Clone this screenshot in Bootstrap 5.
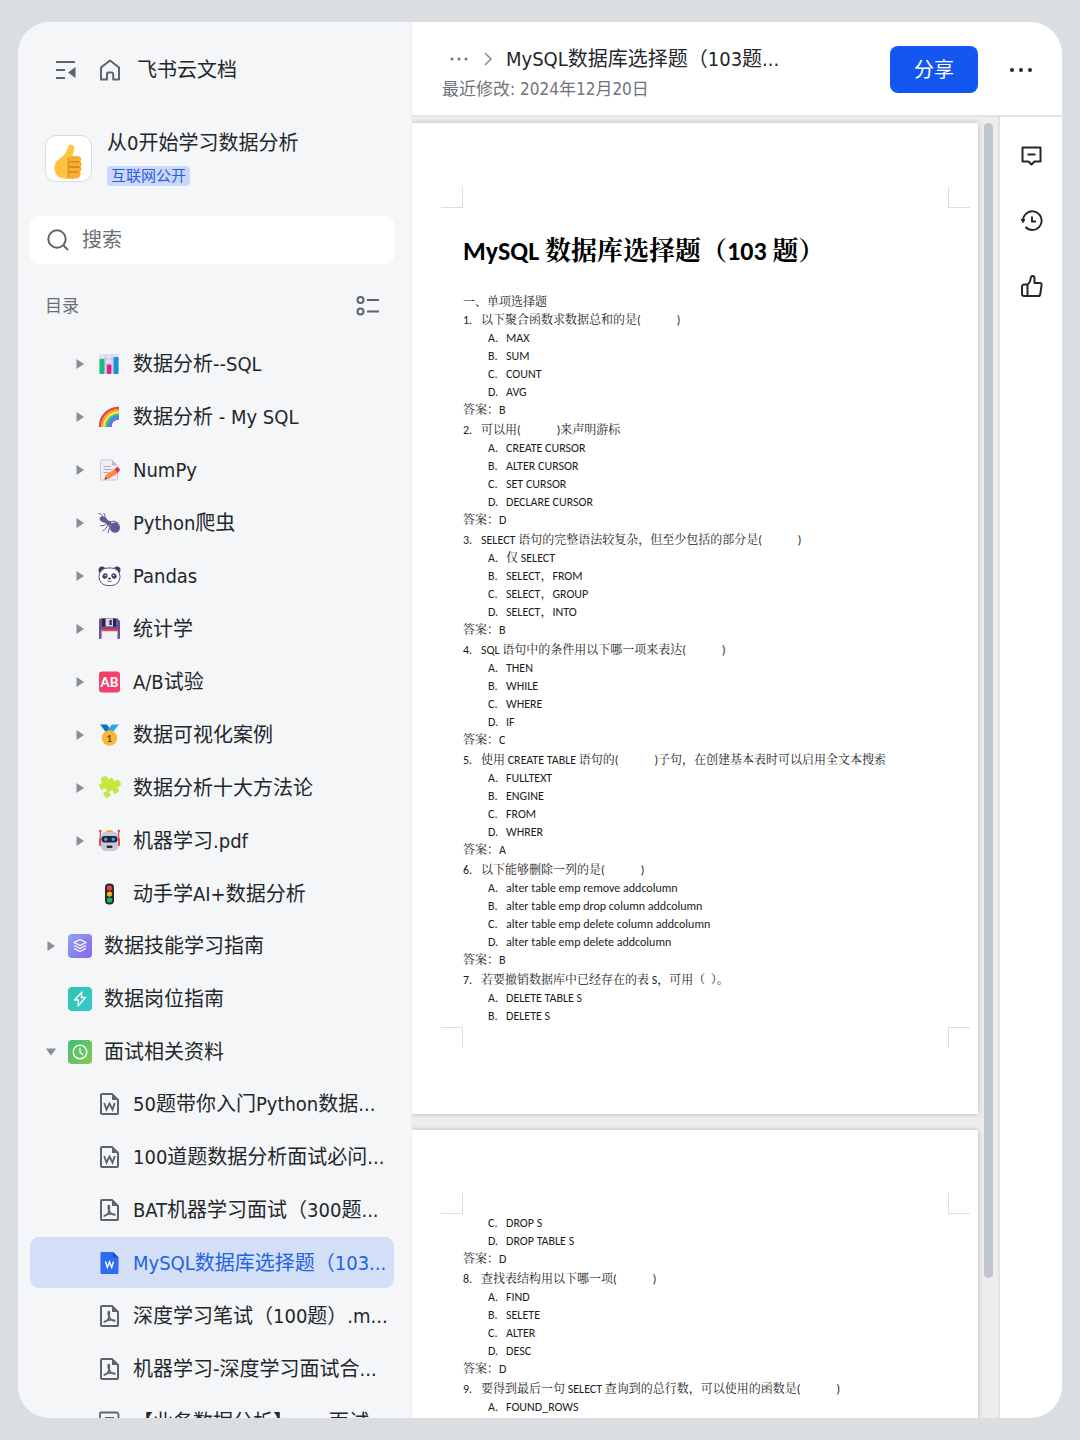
<!DOCTYPE html>
<html lang="zh-CN">
<head>
<meta charset="utf-8">
<meta name="viewport" content="width=device-width, initial-scale=1">
<title>MySQL数据库选择题 - 飞书云文档</title>
<link href="https://cdn.jsdelivr.net/npm/bootstrap@5.3.0/dist/css/bootstrap.min.css" rel="stylesheet">
<style>
  body { background: #dadee2; color: #23272b; font-family: "DejaVu Sans Condensed", "Noto Sans", "Noto Sans CJK SC", sans-serif; font-size: 20px; line-height: 26px; }
  svg { display: block; flex: none; }
  .shell { height: 100vh; padding: 22px 18px; }
  .frame { border-radius: 32px; background: #fff; }
  a { color: inherit; text-decoration: none; }

  .side { flex: 0 0 394px; background: #f4f6f8; padding: 0 17px 0 12px; border-right: 1px solid #eceef0; }
  .side-top { height: 96px; padding-left: 24px; gap: 21px; color: #5f646b; }
  .side-top a { gap: 16px; }
  .side-name { color: #23272b; }
  .site { padding: 12px 0 0 15px; gap: 15px; }
  .thumb { width: 47px; height: 47px; border: 1px solid #d9dbde; border-radius: 11px; background: #fff; padding: 8px 0 0 8px; flex: none; }
  .tag { background: #ccd8fa; color: #2a5fdc; font-size: 15px; line-height: 20px; border-radius: 4px; padding: 0 4px; margin-top: 10px; }
  .finder { margin-top: 30px; height: 48px; background: #fff; border-radius: 9px; padding-left: 17px; gap: 12px; color: #5f646b; }
  .finder input { font-size: 20px; color: #23272b; outline: 0; }
  .finder input::placeholder { color: #6b7077; opacity: 1; }
  .dir { margin: 28px 14px 18px 15px; height: 28px; font-size: 17px; color: #6b7077; }
  .tree { gap: 2px; }
  .tree + .tree { margin-top: 1px; }
  .node { height: 51px; padding-left: 15px; border-radius: 9px; white-space: nowrap; }
  .node .caret { width: 12px; height: 12px; margin-right: 11px; flex: none; }
  .node .caret svg { fill: #8a8f96; }
  .node .pic { margin-right: 12px; color: #5f646b; }
  .deep .node { padding-left: 44px; }
  .node.here { background: #d2dff7; color: #2563e0; }

  .head { height: 95px; border-bottom: 2px solid #e2e4e6; padding: 2px 28px 0 30px; }
  .crumb { gap: 12px; padding-left: 6px; line-height: 30px; }
  .edited { font-size: 17px; line-height: 30px; color: #6f747a; }
  .share { background: #1456f0; color: #fff; border: 0; border-radius: 8px; width: 88px; height: 47px; font-size: 20px; margin-right: 30px; }
  .share:hover { background: #0f49d0; color: #fff; }
  .bare { background: none; border: 0; padding: 0; color: inherit; }

  .reader { background: #ededee; border-right: 2px solid #e0e2e4; padding-top: 6px; }
  .sheets { gap: 16px; }
  .sheet { background: #fff; padding: 64px 8px 66px 29px; box-shadow: 0 0 5px rgba(0,0,0,.22); color: #1c1c1c; font-family: Carlito, Lato, "Noto Serif CJK SC", "Noto Sans CJK SC", sans-serif; font-size: 12px; line-height: 18px; }
  .sheet + .sheet { padding-top: 63px; }
  .marks i { width: 22px; height: 21px; border: 0 solid #dcdcdc; }
  .marks .tl { border-width: 0 1px 1px 0; }
  .marks .tr { border-width: 0 0 1px 1px; }
  .marks .bl { border-width: 1px 1px 0 0; }
  .marks .br { border-width: 1px 0 0 1px; }
  .copy { padding-left: 22px; margin-bottom: 2px; white-space: nowrap; }
  .copy h1 { font-size: 26px; line-height: 36px; font-weight: 700; margin: 25px 0 24px; color: #000; }
  .copy p { margin: 0; }
  .quiz { margin-bottom: 2px; }
  .quiz p, .quiz li { display: flex; }
  .quiz b { font-weight: 400; width: 18px; flex: none; }
  .quiz ul { list-style: none; margin: 0; padding-left: 25px; }

  .rail { width: 20px; flex: none; padding: 0 6px; }
  .rail i { width: 9px; height: 1155px; max-height: 90%; border-radius: 5px; background: #c0c4cb; }
  .tools { width: 62px; flex: none; padding-top: 27px; gap: 41px; color: #23272b; }
</style>
</head>
<body>
<svg width="0" height="0" class="position-absolute" aria-hidden="true">
  <symbol id="right" viewBox="0 0 12 12"><path d="M2.500 1v10L10 6z"/></symbol>
  <symbol id="down" viewBox="0 0 12 12"><path d="M.8 2.500h10.400L6 9.500z"/></symbol>
  <symbol id="word" viewBox="0 0 24 24"><path d="M5 2h10l6 6v13a1 1 0 0 1-1 1H5a1 1 0 0 1-1-1V3a1 1 0 0 1 1-1z" fill="none" stroke="currentColor" stroke-width="2"/><path d="M15 2v6h6z" fill="currentColor"/><path d="M7.200 11l2.300 6.500 3-6 3 6 2.300-6.500" fill="none" stroke="currentColor" stroke-width="1.900"/></symbol>
  <symbol id="pdf" viewBox="0 0 24 24"><path d="M5 2h10l6 6v13a1 1 0 0 1-1 1H5a1 1 0 0 1-1-1V3a1 1 0 0 1 1-1z" fill="none" stroke="currentColor" stroke-width="2"/><path d="M15 2v6h6z" fill="currentColor"/><path d="M12 7.500v4.500c0 2.500-2 5-4.800 6M12 12c.5 2.500 2.500 4.500 5.800 5M8 17.300c2.500-1.300 6.500-1.800 9.500-1" fill="none" stroke="currentColor" stroke-width="1.700" stroke-linecap="round"/><path d="M11.800 8v2.500" stroke="currentColor" stroke-width="2.600" stroke-linecap="round"/></symbol>
</svg>

<div class="shell">
<div class="frame d-flex h-100 overflow-hidden">

  <nav class="side d-flex flex-column overflow-hidden" aria-label="知识库">
    <div class="side-top d-flex align-items-center flex-shrink-0">
      <button class="bare" type="button" aria-label="收起侧栏"><svg width="24" height="24" viewBox="0 0 24 24"><path d="M2 4h19M2 12h9M2 20h9" stroke="currentColor" stroke-width="2"/><path d="M21.500 9v11L14 14.500z" fill="currentColor"/></svg></button>
      <a href="#" class="d-flex align-items-center"><svg width="22" height="24" viewBox="0 0 22 24" fill="none" stroke="currentColor" stroke-width="2" stroke-linejoin="round"><path d="M2 9.500L11 2.500l9 7V21.500h-5.800v-5.500a1.500 1.500 0 0 0-1.500-1.500H9.500A1.500 1.500 0 0 0 8 16v5.500H2z"/></svg><span class="side-name">飞书云文档</span></a>
    </div>

    <div class="site d-flex align-items-center flex-shrink-0">
      <div class="thumb"><svg width="29" height="36" viewBox="0 0 29 36"><path d="M15 1c2-1.500 5.500 0 5.200 3.500-.3 3-1.700 5.500-1.500 7.500l6 .5c3 .4 2.800 4 1.300 5 1.900 1 1.900 4 .3 5 1.600 1.200 1.400 4-.4 5 1.200 1.500.6 5.500-2.400 6.500-4 1-10 1-14 .5C3 34 0 29 .5 22.500 1 17 5 15 8.500 12.500 12 9.500 13 6 15 1z" fill="#fec440"/><path d="M14 13c3-1 8-.9 11-.4 2.800.8 2.300 4 1 4.900 1.900 1 1.900 4 .3 5 1.600 1.200 1.400 4-.4 5 1.200 1.500.6 5.500-2.400 6.500-3 .7-6.500.8-9.500.6z" fill="#f9ae2e"/><path d="M15.500 17.800h9M15.500 23h9.500M15.500 28.200h8.500" stroke="#cf7f22" stroke-width="1.300" stroke-linecap="round"/><path d="M14.300 13.500v20.500" stroke="#dd9226" stroke-width="1.300"/></svg></div>
      <div class="d-flex flex-column align-items-start"><span>从0开始学习数据分析</span><span class="tag">互联网公开</span></div>
    </div>

    <label class="finder d-flex align-items-center flex-shrink-0">
      <svg width="23" height="23" viewBox="0 0 23 23" fill="none" stroke="currentColor" stroke-width="2"><circle cx="10" cy="10" r="8.700"/><path d="M16.500 16.500l4.500 4.500"/></svg>
      <input type="search" class="border-0 bg-transparent p-0 flex-fill" placeholder="搜索" aria-label="搜索">
    </label>

    <div class="dir d-flex align-items-center justify-content-between flex-shrink-0">
      <span>目录</span>
      <button class="bare" type="button" aria-label="目录选项"><svg width="24" height="22" viewBox="0 0 24 22" fill="none" stroke="#5f646b" stroke-width="2"><circle cx="4.500" cy="5" r="3"/><circle cx="4.500" cy="16.500" r="3"/><path d="M11 5h12M11 16.500h12"/></svg></button>
    </div>

    <ul class="tree deep list-unstyled d-flex flex-column mb-0 flex-shrink-0">
      <li><a href="#" class="node d-flex align-items-center"><span class="caret"><svg width="12" height="12"><use href="#right"/></svg></span><svg class="pic" width="24" height="24" viewBox="0 0 24 24"><rect x="2" y="2" width="20" height="20" rx="2" fill="#e3def0"/><path d="M2 7h20M2 12h20M2 17h20M8.500 2v20M15 2v20" stroke="#c5bdd9" stroke-width=".7"/><rect x="2.500" y="7" width="5" height="15" rx="1" fill="#17c07a"/><rect x="9.800" y="12.500" width="4.600" height="9.500" rx="1" fill="#e0208c"/><rect x="16.500" y="5" width="5" height="17" rx="1" fill="#1592d8"/></svg><span>数据分析--SQL</span></a></li>
      <li><a href="#" class="node d-flex align-items-center"><span class="caret"><svg width="12" height="12"><use href="#right"/></svg></span><svg class="pic" width="24" height="24" viewBox="0 0 24 24" fill="none" stroke-width="2.400"><path d="M3 22C3 11 11 3 22 3" stroke="#e04a3c"/><path d="M5.200 22C5.200 12.500 12.500 5.200 22 5.200" stroke="#fb9a2d"/><path d="M7.400 22C7.400 13.500 13.500 7.400 22 7.400" stroke="#fde047"/><path d="M9.600 22C9.600 15 15 9.600 22 9.600" stroke="#3fc26c"/><path d="M11.800 22C11.800 16 16 11.800 22 11.800" stroke="#2a93e8"/><path d="M13.800 22C13.800 17 17 13.800 22 13.800" stroke="#8a5bd6" stroke-width="2"/></svg><span>数据分析 - My SQL</span></a></li>
      <li><a href="#" class="node d-flex align-items-center"><span class="caret"><svg width="12" height="12"><use href="#right"/></svg></span><svg class="pic" width="24" height="24" viewBox="0 0 24 24"><path d="M4.500 2H15l5.500 5.500V21a1 1 0 0 1-1 1h-15a1 1 0 0 1-1-1V3a1 1 0 0 1 1-1z" fill="#f1eef6" stroke="#cdc6d8"/><path d="M15 2v5.500h5.500z" fill="#c3bad0"/><path d="M6.500 8.500h7M6.500 11.500h9M6.500 14.500h6" stroke="#b1a8bf" stroke-width="1.100"/><path d="M7.500 21.500l1.300-4.500L18 11l3 4-9.500 6z" fill="#fb8a3c"/><path d="M17.500 11.300l2-1.800c1.600-1.200 4.400 2 3 3.600l-2 2z" fill="#e0325f"/><path d="M7.500 21.500l.8-2.600 1.800 2z" fill="#5b3a3a"/></svg><span>NumPy</span></a></li>
      <li><a href="#" class="node d-flex align-items-center"><span class="caret"><svg width="12" height="12"><use href="#right"/></svg></span><svg class="pic" width="24" height="24" viewBox="0 0 24 24" fill="#635994"><ellipse cx="6.500" cy="8.500" rx="4" ry="2.800" transform="rotate(25 6.500 8.500)"/><ellipse cx="11.500" cy="12" rx="3.300" ry="2.300" transform="rotate(30 11.500 12)"/><ellipse cx="18" cy="16.500" rx="5" ry="5.300"/><path d="M6 6.500C5.500 4 4 2.500 1.500 2.500M8 6.500C8.500 4.500 7.500 3 6.500 2M9 13c-2 2-4 2-6 1.500M11 14c-1.500 3-3 4.500-5.500 6M12.500 14c0 3-.5 5-1.500 8M13 11l4-1 4 2" fill="none" stroke="#635994" stroke-width="1"/></svg><span>Python爬虫</span></a></li>
      <li><a href="#" class="node d-flex align-items-center"><span class="caret"><svg width="12" height="12"><use href="#right"/></svg></span><svg class="pic" width="24" height="24" viewBox="0 0 24 24"><circle cx="5" cy="6" r="3.500" fill="#433b6b"/><circle cx="20" cy="6" r="3.500" fill="#433b6b"/><rect x="2" y="4" width="21" height="17.500" rx="8.500" fill="#fff" stroke="#57506f" stroke-width="1"/><ellipse cx="8" cy="12" rx="2.500" ry="2.800" fill="#433b6b" transform="rotate(25 8 12)"/><ellipse cx="17" cy="12" rx="2.500" ry="2.800" fill="#433b6b" transform="rotate(-25 17 12)"/><circle cx="8.500" cy="11.500" r=".8" fill="#fff"/><circle cx="16.500" cy="11.500" r=".8" fill="#fff"/><ellipse cx="12.500" cy="14.500" rx="1.300" ry=".9" fill="#222"/><path d="M10.500 17c.8.900 1.600.7 2-.2.400.9 1.200 1.100 2 .2" fill="none" stroke="#222" stroke-width=".9"/></svg><span>Pandas</span></a></li>
      <li><a href="#" class="node d-flex align-items-center"><span class="caret"><svg width="12" height="12"><use href="#right"/></svg></span><svg class="pic" width="24" height="24" viewBox="0 0 24 24"><path d="M3 1.500h17.500L23 4v17a1 1 0 0 1-1 1H3a1 1 0 0 1-1-1V2.500a1 1 0 0 1 1-1z" fill="#6a539c"/><rect x="5" y="1.500" width="14" height="8" fill="#2d2146"/><rect x="8.500" y="1.500" width="7.500" height="8" fill="#d8d2e6"/><rect x="12.500" y="3" width="2.200" height="5" fill="#2d2146"/><rect x="4.500" y="12.500" width="16" height="9.500" fill="#f3f0f7"/><rect x="4.500" y="12" width="16" height="2.200" fill="#f03e4e"/></svg><span>统计学</span></a></li>
      <li><a href="#" class="node d-flex align-items-center"><span class="caret"><svg width="12" height="12"><use href="#right"/></svg></span><svg class="pic" width="24" height="24" viewBox="0 0 24 24"><rect x="2" y="1.500" width="21" height="21" rx="3" fill="#f43f6b"/><text x="12.500" y="17" text-anchor="middle" font-family="Lato, sans-serif" font-weight="900" font-size="13" fill="#fff">AB</text></svg><span>A/B试验</span></a></li>
      <li><a href="#" class="node d-flex align-items-center"><span class="caret"><svg width="12" height="12"><use href="#right"/></svg></span><svg class="pic" width="24" height="24" viewBox="0 0 24 24"><path d="M3 1.500h7l3.500 5-4 3.500z" fill="#0f74bd"/><path d="M22 1.500h-7L10.500 7l4.500 3z" fill="#28a5e6"/><circle cx="12.500" cy="15" r="7.700" fill="#fbb53c"/><text x="12.500" y="19" text-anchor="middle" font-family="Lato, sans-serif" font-weight="700" font-size="10" fill="#7a4a12">1</text></svg><span>数据可视化案例</span></a></li>
      <li><a href="#" class="node d-flex align-items-center"><span class="caret"><svg width="12" height="12"><use href="#right"/></svg></span><svg class="pic" width="24" height="24" viewBox="0 0 24 24"><path transform="rotate(-28 12 12)" d="M5 5h4.500c.8-.6-.4-1.300-.4-2.600C9.100.900 10.400 0 12 0s2.900.900 2.900 2.400c0 1.300-1.200 2-.4 2.600H19v4.500c.6.800 1.300-.4 2.600-.4 1.500 0 2.400 1.300 2.400 2.900s-.9 2.900-2.400 2.900c-1.300 0-2-1.200-2.600-.4V19h-4.500c-.8-.6.400-1.300.4-2.300 0-1.300-1.300-2.200-2.900-2.200s-2.900.900-2.900 2.200c0 1 1.200 1.700.4 2.300H5v-4.500c.6-.8 1.300.4 2.300.4 1.300 0 2.200-1.300 2.200-2.900s-.9-2.900-2.200-2.900c-1 0-1.700 1.200-2.300.4z" fill="#c4e83e" stroke="#c4e83e" stroke-width="1.500" stroke-linejoin="round"/></svg><span>数据分析十大方法论</span></a></li>
      <li><a href="#" class="node d-flex align-items-center"><span class="caret"><svg width="12" height="12"><use href="#right"/></svg></span><svg class="pic" width="24" height="24" viewBox="0 0 24 24"><path d="M3.300 1v9M21.700 1v9" stroke="#c9505c" stroke-width="1.200"/><circle cx="3.300" cy="2" r="1.300" fill="#f0454f"/><circle cx="21.700" cy="2" r="1.300" fill="#f0454f"/><rect x="2" y="9" width="3" height="8" rx="1" fill="#f0454f"/><rect x="20" y="9" width="3" height="8" rx="1" fill="#f0454f"/><path d="M8.500 4c0-4 8-4 8 0z" fill="#fb9f3c"/><path d="M4 7c0-2.500 2-4 4.500-4h8C19 3 21 4.500 21 7v10c0 2.800-1.800 5-4.500 5h-8C5.800 22 4 19.800 4 17z" fill="#cbc7d6"/><rect x="4.500" y="7" width="16" height="6.500" rx="3.200" fill="#23263b"/><circle cx="8.700" cy="10.200" r="1.700" fill="#22b1ee"/><circle cx="16.300" cy="10.200" r="1.700" fill="#22b1ee"/><rect x="9.500" y="16.500" width="6" height="2.400" rx="1.200" fill="#2b2a35"/></svg><span>机器学习.pdf</span></a></li>
      <li><a href="#" class="node d-flex align-items-center"><span class="caret"></span><svg class="pic" width="24" height="24" viewBox="0 0 24 24"><rect x="8" y="1.500" width="9" height="21" rx="4" fill="#2c2b33"/><circle cx="12.500" cy="6" r="2.600" fill="#ee3f43"/><circle cx="12.500" cy="12" r="2.600" fill="#fbb02d"/><circle cx="12.500" cy="18" r="2.600" fill="#17b866"/></svg><span>动手学AI+数据分析</span></a></li>
    </ul>
    <ul class="tree list-unstyled d-flex flex-column mb-0 flex-shrink-0">
      <li><a href="#" class="node d-flex align-items-center"><span class="caret"><svg width="12" height="12"><use href="#right"/></svg></span><svg class="pic" width="24" height="24" viewBox="0 0 24 24"><defs><linearGradient id="g1" x2="1" y2="1"><stop stop-color="#8fa0f8"/><stop offset="1" stop-color="#8468e6"/></linearGradient></defs><rect width="24" height="24" rx="4" fill="url(#g1)"/><g fill="none" stroke="#fff" stroke-width="1.300" stroke-linejoin="round"><path d="M12 5.500l6 3-6 3-6-3z"/><path d="M6 11.500l6 3 6-3M6 14.500l6 3 6-3"/></g></svg><span>数据技能学习指南</span></a></li>
      <li><a href="#" class="node d-flex align-items-center"><span class="caret"></span><svg class="pic" width="24" height="24" viewBox="0 0 24 24"><defs><linearGradient id="g2" x2="1" y2="1"><stop stop-color="#2cc7a6"/><stop offset="1" stop-color="#3ac6d4"/></linearGradient></defs><rect width="24" height="24" rx="4" fill="url(#g2)"/><path d="M14 5l-7.500 8h4L10 19l7.500-8.500h-4.300z" fill="none" stroke="#fff" stroke-width="1.300" stroke-linejoin="round"/></svg><span>数据岗位指南</span></a></li>
      <li><a href="#" class="node d-flex align-items-center"><span class="caret"><svg width="12" height="12"><use href="#down"/></svg></span><svg class="pic" width="24" height="24" viewBox="0 0 24 24"><defs><linearGradient id="g3" x2="1" y2="1"><stop stop-color="#41bf7d"/><stop offset="1" stop-color="#8ac653"/></linearGradient></defs><rect width="24" height="24" rx="4" fill="url(#g3)"/><g fill="none" stroke="#fff" stroke-width="1.300"><circle cx="12" cy="12" r="6.800"/><path d="M12 7.500V12l3 3"/></g></svg><span>面试相关资料</span></a></li>
    </ul>
    <ul class="tree deep list-unstyled d-flex flex-column mb-0 flex-shrink-0">
      <li><a href="#" class="node d-flex align-items-center"><span class="caret"></span><svg class="pic" width="24" height="24"><use href="#word"/></svg><span>50题带你入门Python数据...</span></a></li>
      <li><a href="#" class="node d-flex align-items-center"><span class="caret"></span><svg class="pic" width="24" height="24"><use href="#word"/></svg><span>100道题数据分析面试必问...</span></a></li>
      <li><a href="#" class="node d-flex align-items-center"><span class="caret"></span><svg class="pic" width="24" height="24"><use href="#pdf"/></svg><span>BAT机器学习面试（300题...</span></a></li>
      <li><a href="#" class="node here d-flex align-items-center" aria-current="page"><span class="caret"></span><svg class="pic" width="24" height="24" viewBox="0 0 24 24"><path d="M4.500 1H16l5.500 5.500V22a1 1 0 0 1-1 1h-16a1 1 0 0 1-1-1V2a1 1 0 0 1 1-1z" fill="#2f6bf2"/><path d="M16 1l5.500 5.500H17a1 1 0 0 1-1-1z" fill="#1d48b8"/><path d="M8.500 10.500l1.800 6 2.200-5.500 2.200 5.500 1.800-6" fill="none" stroke="#fff" stroke-width="1.400"/></svg><span>MySQL数据库选择题（103...</span></a></li>
      <li><a href="#" class="node d-flex align-items-center"><span class="caret"></span><svg class="pic" width="24" height="24"><use href="#pdf"/></svg><span>深度学习笔试（100题）.m...</span></a></li>
      <li><a href="#" class="node d-flex align-items-center"><span class="caret"></span><svg class="pic" width="24" height="24"><use href="#pdf"/></svg><span>机器学习-深度学习面试合...</span></a></li>
      <li><a href="#" class="node d-flex align-items-center"><span class="caret"></span><svg class="pic" width="24" height="24" viewBox="0 0 24 24" fill="none" stroke="currentColor" stroke-width="1.800"><path d="M4 2.500h15a2.500 2.500 0 0 1 2.500 2.500v16a1 1 0 0 1-1 1H4a1 1 0 0 1-1-1v-17.500a1 1 0 0 1 1-1zM8 8h9M8 13h9"/></svg><span>【业务数据分析】——面试...</span></a></li>
    </ul>
  </nav>

  <main class="d-flex flex-column flex-fill overflow-hidden">
    <header class="head d-flex align-items-center flex-shrink-0">
      <div class="me-auto mt-2">
        <div class="crumb d-flex align-items-center">
          <button class="bare" type="button" aria-label="上级目录"><svg width="22" height="22" viewBox="0 0 22 22" fill="#6f747a"><circle cx="4" cy="11" r="1.500"/><circle cx="11" cy="11" r="1.500"/><circle cx="18" cy="11" r="1.500"/></svg></button>
          <svg width="12" height="16" viewBox="0 0 12 16" fill="none" stroke="#8a8f96" stroke-width="1.600"><path d="M3 2l6 6-6 6"/></svg>
          <span>MySQL数据库选择题（103题...</span>
        </div>
        <div class="edited">最近修改: 2024年12月20日</div>
      </div>
      <button type="button" class="btn share p-0">分享</button>
      <button class="bare" type="button" aria-label="更多"><svg width="26" height="26" viewBox="0 0 26 26" fill="#23272b"><circle cx="4" cy="13" r="2"/><circle cx="13" cy="13" r="2"/><circle cx="22" cy="13" r="2"/></svg></button>
    </header>

    <div class="d-flex flex-fill overflow-hidden">
      <div class="reader d-flex flex-fill overflow-hidden">
        <div class="sheets d-flex flex-column flex-fill">
          <article class="sheet">
            <div class="marks d-flex justify-content-between"><i class="tl"></i><i class="tr"></i></div>
            <div class="copy">
              <h1>MySQL 数据库选择题（103 题）</h1>
              <p>一、单项选择题</p>
              <div class="quiz"><p><b>1.</b>以下聚合函数求数据总和的是(　　　)</p><ul><li><b>A.</b>MAX</li><li><b>B.</b>SUM</li><li><b>C.</b>COUNT</li><li><b>D.</b>AVG</li></ul><p>答案：B</p></div>
              <div class="quiz"><p><b>2.</b>可以用(　　　)来声明游标</p><ul><li><b>A.</b>CREATE CURSOR</li><li><b>B.</b>ALTER CURSOR</li><li><b>C.</b>SET CURSOR</li><li><b>D.</b>DECLARE CURSOR</li></ul><p>答案：D</p></div>
              <div class="quiz"><p><b>3.</b>SELECT 语句的完整语法较复杂，但至少包括的部分是(　　　)</p><ul><li><b>A.</b>仅 SELECT</li><li><b>B.</b>SELECT，FROM</li><li><b>C.</b>SELECT，GROUP</li><li><b>D.</b>SELECT，INTO</li></ul><p>答案：B</p></div>
              <div class="quiz"><p><b>4.</b>SQL 语句中的条件用以下哪一项来表达(　　　)</p><ul><li><b>A.</b>THEN</li><li><b>B.</b>WHILE</li><li><b>C.</b>WHERE</li><li><b>D.</b>IF</li></ul><p>答案：C</p></div>
              <div class="quiz"><p><b>5.</b>使用 CREATE TABLE 语句的(　　　)子句，在创建基本表时可以启用全文本搜索</p><ul><li><b>A.</b>FULLTEXT</li><li><b>B.</b>ENGINE</li><li><b>C.</b>FROM</li><li><b>D.</b>WHRER</li></ul><p>答案：A</p></div>
              <div class="quiz"><p><b>6.</b>以下能够删除一列的是(　　　)</p><ul><li><b>A.</b>alter table emp remove addcolumn</li><li><b>B.</b>alter table emp drop column addcolumn</li><li><b>C.</b>alter table emp delete column addcolumn</li><li><b>D.</b>alter table emp delete addcolumn</li></ul><p>答案：B</p></div>
              <div class="quiz mb-0"><p><b>7.</b>若要撤销数据库中已经存在的表 S，可用（&nbsp; ）。</p><ul><li><b>A.</b>DELETE TABLE S</li><li><b>B.</b>DELETE S</li></ul></div>
            </div>
            <div class="marks d-flex justify-content-between"><i class="bl"></i><i class="br"></i></div>
          </article>
          <article class="sheet">
            <div class="marks d-flex justify-content-between"><i class="tl"></i><i class="tr"></i></div>
            <div class="copy">
              <div class="quiz"><ul><li><b>C.</b>DROP S</li><li><b>D.</b>DROP TABLE S</li></ul><p>答案：D</p></div>
              <div class="quiz"><p><b>8.</b>查找表结构用以下哪一项(　　　)</p><ul><li><b>A.</b>FIND</li><li><b>B.</b>SELETE</li><li><b>C.</b>ALTER</li><li><b>D.</b>DESC</li></ul><p>答案：D</p></div>
              <div class="quiz"><p><b>9.</b>要得到最后一句 SELECT 查询到的总行数，可以使用的函数是(　　　)</p><ul><li><b>A.</b>FOUND_ROWS</li></ul></div>
            </div>
          </article>
        </div>
        <div class="rail"><i class="d-block"></i></div>
      </div>
      <aside class="tools d-flex flex-column align-items-center">
        <button class="bare" type="button" aria-label="评论"><svg width="24" height="24" viewBox="0 0 24 24" fill="none" stroke="currentColor" stroke-width="2" stroke-linejoin="round"><path d="M3.500 3.500h18v14h-6l-3 3-3-3h-6zM8.500 10.500h8"/></svg></button>
        <button class="bare" type="button" aria-label="历史记录"><svg width="24" height="24" viewBox="0 0 24 24" fill="none" stroke="currentColor" stroke-width="1.900"><path d="M4 12a9.300 9.300 0 1 1 2.500 6M13 7.500v5h4"/><path d="M2 10.500h4L4 13.800z" fill="currentColor" stroke-width=".8"/></svg></button>
        <button class="bare" type="button" aria-label="点赞"><svg width="24" height="24" viewBox="0 0 24 24" fill="none" stroke="currentColor" stroke-width="2" stroke-linejoin="round"><path d="M8.500 10.500V22H5a2 2 0 0 1-2-2v-7.500a2 2 0 0 1 2-2zc2.500-1.500 3-4 3.200-6.500.2-2.800 3.800-2.500 3.800.5v4.500h5.500c1.200 0 1.800.8 1.600 2l-1.300 9c-.2 1.300-.8 2-2 2H8.500"/></svg></button>
      </aside>
    </div>
  </main>
</div>
</div>
<script src="https://cdn.jsdelivr.net/npm/bootstrap@5.3.0/dist/js/bootstrap.bundle.min.js"></script>
</body>
</html>
